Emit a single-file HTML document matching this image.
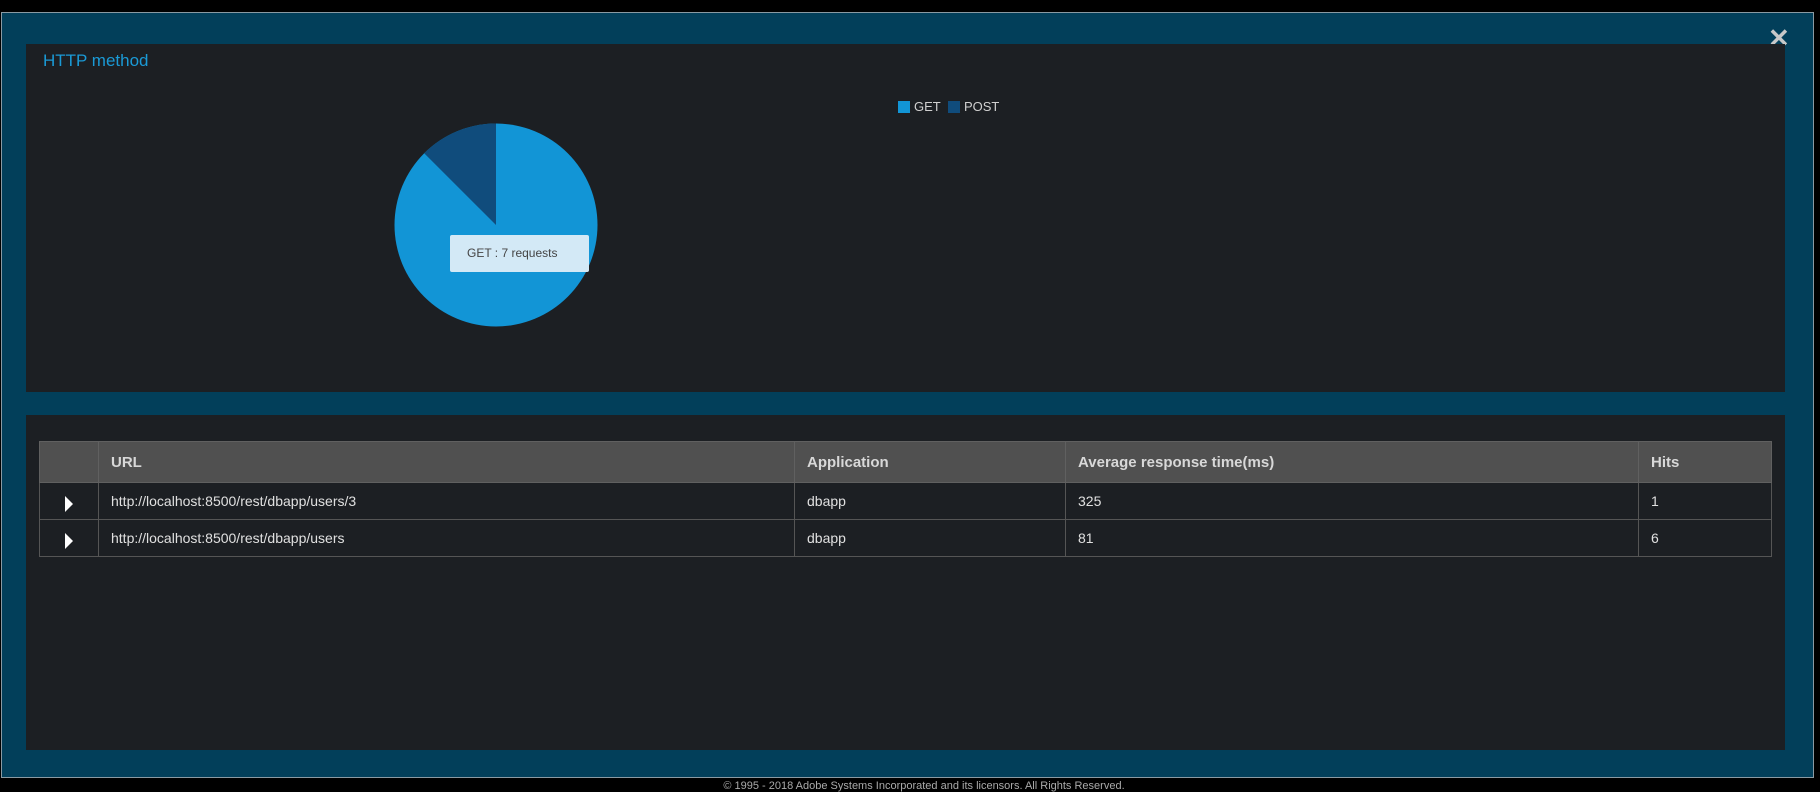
<!DOCTYPE html>
<html><head><meta charset="utf-8"><style>
*{margin:0;padding:0;box-sizing:border-box}
html,body{width:1820px;height:787px;overflow:hidden;background:#000;font-family:"Liberation Sans",sans-serif}
.modal{position:absolute;left:1px;top:12px;width:1813px;height:766px;background:#023f5a;border:1px solid #8a9aa3}
.panel{position:absolute;left:24px;width:1759px;background:#1c1f23}
.title{position:absolute;left:17px;top:7px;color:#1a9ad6;font-size:17px}
.legend{position:absolute;left:872px;top:55px;color:#d0d0d0;font-size:13px;display:flex;align-items:center}
.legend i{display:inline-block;width:12px;height:12px;margin-right:4px}
.tip{position:absolute;left:424px;top:191px;width:139px;height:37px;background:#d3e9f6;border-radius:2px;color:#444;font-size:12px;line-height:37px;padding-left:17px}
table{position:absolute;left:13px;top:26px;width:1733px;border-collapse:collapse;font-size:14px;color:#e0e0e0}
th{background:#505050;height:41px;text-align:left;font-weight:bold;color:#d8d8d8;border:1px solid #606060;padding-left:12px;font-size:15px}
td{height:37px;border:1px solid #555;padding-left:12px}
.tri{width:0;height:0;border-left:8px solid #fff;border-top:8px solid transparent;border-bottom:8px solid transparent;margin-left:25px;margin-top:6px}
.x{position:absolute;left:1766px;top:10px;color:#c8c8c8;font-size:26px;font-weight:bold}
.foot{position:absolute;top:780px;left:0;width:1848px;text-align:center;color:#aaa;font-size:11px}
</style></head><body>
<div class="foot">© 1995 - 2018 Adobe Systems Incorporated and its licensors. All Rights Reserved.</div>
<div class="modal">
<div class="x">✕</div>
<div class="panel" style="top:31px;height:348px">
<div class="title">HTTP method</div>
<div class="legend"><i style="background:#1295d6"></i>GET&nbsp;&nbsp;<i style="background:#104c7c"></i>POST</div>
<svg style="position:absolute;left:0;top:0" width="700" height="348">
<circle cx="470" cy="181" r="101.5" fill="#1295d6"/>
<path d="M470 181 L470 79.5 A101.5 101.5 0 0 0 398.2 109.2 Z" fill="#104c7c"/>
</svg>
<div class="tip">GET : 7 requests</div>
</div>
<div class="panel" style="top:402px;height:335px">
<table>
<tr><th style="width:59px"></th><th style="width:696px">URL</th><th style="width:271px">Application</th><th style="width:573px">Average response time(ms)</th><th>Hits</th></tr>
<tr><td style="padding-left:0"><div class="tri"></div></td><td>http://localhost:8500/rest/dbapp/users/3</td><td>dbapp</td><td>325</td><td>1</td></tr>
<tr><td style="padding-left:0"><div class="tri"></div></td><td>http://localhost:8500/rest/dbapp/users</td><td>dbapp</td><td>81</td><td>6</td></tr>
</table>
</div>
</div>
</body></html>
